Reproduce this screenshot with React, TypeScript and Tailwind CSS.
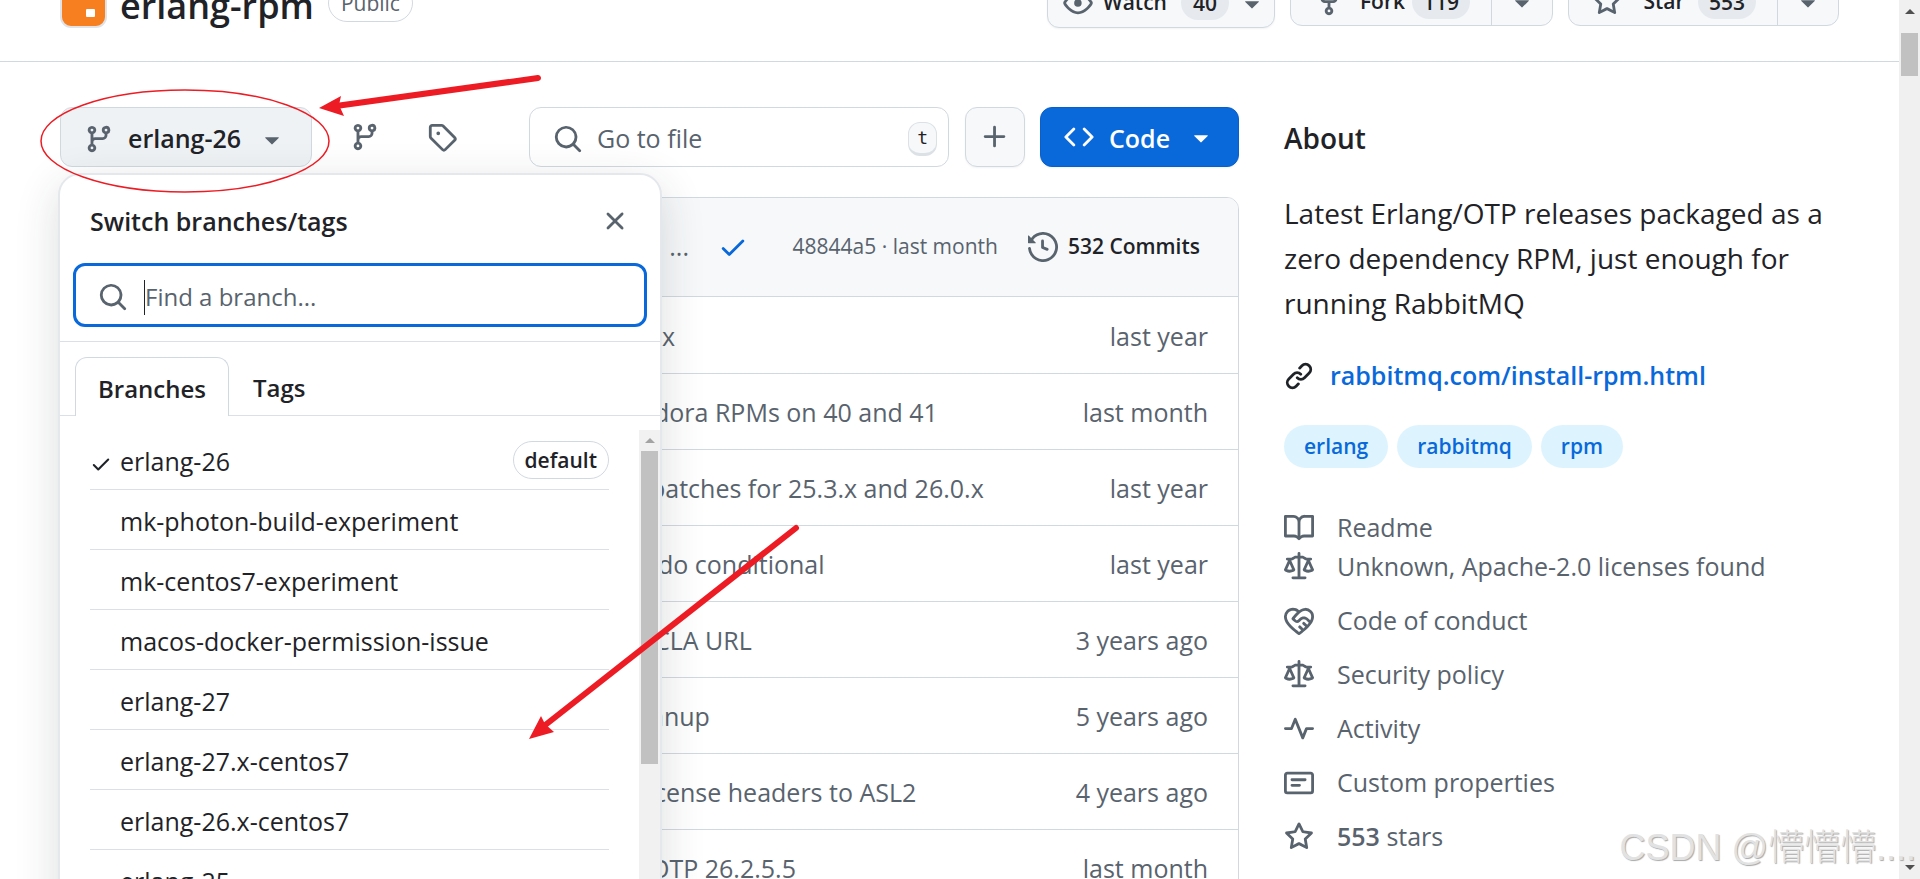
import React from "react";

const ICONS = {
  branch:
    "M9.5 3.25a2.25 2.25 0 1 1 3 2.122V6A2.5 2.5 0 0 1 10 8.5H6a1 1 0 0 0-1 1v1.128a2.251 2.251 0 1 1-1.5 0V5.372a2.25 2.25 0 1 1 1.5 0v1.836A2.493 2.493 0 0 1 6 7h4a1 1 0 0 0 1-1v-.628A2.25 2.25 0 0 1 9.5 3.25Zm-6 0a.75.75 0 1 0 1.5 0 .75.75 0 0 0-1.5 0Zm8.25-.75a.75.75 0 1 0 0 1.5.75.75 0 0 0 0-1.5ZM4.25 12a.75.75 0 1 0 0 1.5.75.75 0 0 0 0-1.5Z",
  tag: "M1 7.775V2.75C1 1.784 1.784 1 2.75 1h5.025c.464 0 .91.184 1.238.513l6.25 6.25a1.75 1.75 0 0 1 0 2.474l-5.026 5.026a1.75 1.75 0 0 1-2.474 0l-6.25-6.25A1.752 1.752 0 0 1 1 7.775Zm1.5 0c0 .066.026.13.073.177l6.25 6.25a.25.25 0 0 0 .354 0l5.025-5.025a.25.25 0 0 0 0-.354l-6.25-6.25a.25.25 0 0 0-.177-.073H2.75a.25.25 0 0 0-.25.25ZM6 5a1 1 0 1 1 0 2 1 1 0 0 1 0-2Z",
  search:
    "M10.68 11.74a6 6 0 0 1-7.922-8.982 6 6 0 0 1 8.982 7.922l3.04 3.04a.749.749 0 0 1-.326 1.275.749.749 0 0 1-.734-.215ZM11.5 7a4.499 4.499 0 1 0-8.997 0A4.499 4.499 0 0 0 11.5 7Z",
  plus: "M7.75 2a.75.75 0 0 1 .75.75V7h4.25a.75.75 0 0 1 0 1.5H8.5v4.25a.75.75 0 0 1-1.5 0V8.5H2.75a.75.75 0 0 1 0-1.5H7V2.75A.75.75 0 0 1 7.75 2Z",
  code: "m11.28 3.22 4.25 4.25a.75.75 0 0 1 0 1.06l-4.25 4.25a.749.749 0 0 1-1.275-.326.749.749 0 0 1 .215-.734L13.94 8l-3.72-3.72a.749.749 0 0 1 .326-1.275.749.749 0 0 1 .734.215Zm-6.56 0a.751.751 0 0 1 1.042.018.751.751 0 0 1 .018 1.042L2.06 8l3.72 3.72a.749.749 0 0 1-.326 1.275.749.749 0 0 1-.734-.215L.47 8.53a.75.75 0 0 1 0-1.06Z",
  caret:
    "m4.427 7.427 3.396 3.396a.25.25 0 0 0 .354 0l3.396-3.396A.25.25 0 0 0 11.396 7H4.604a.25.25 0 0 0-.177.427Z",
  close:
    "M3.72 3.72a.75.75 0 0 1 1.06 0L8 6.94l3.22-3.22a.749.749 0 0 1 1.275.326.749.749 0 0 1-.215.734L9.06 8l3.22 3.22a.749.749 0 0 1-.326 1.275.749.749 0 0 1-.734-.215L8 9.06l-3.22 3.22a.751.751 0 0 1-1.042-.018.751.751 0 0 1-.018-1.042L6.94 8 3.72 4.78a.75.75 0 0 1 0-1.06Z",
  check:
    "M13.78 4.22a.75.75 0 0 1 0 1.06l-7.25 7.25a.75.75 0 0 1-1.06 0L2.22 9.28a.751.751 0 0 1 .018-1.042.751.751 0 0 1 1.042-.018L6 10.94l6.72-6.72a.75.75 0 0 1 1.06 0Z",
  history:
    "m.427 1.927 1.215 1.215a8.002 8.002 0 1 1-1.6 5.685.75.75 0 1 1 1.493-.154 6.5 6.5 0 1 0 1.18-4.458l1.358 1.358A.25.25 0 0 1 3.896 6H.25A.25.25 0 0 1 0 5.75V2.104a.25.25 0 0 1 .427-.177ZM7.75 4a.75.75 0 0 1 .75.75v2.992l2.028.812a.75.75 0 0 1-.557 1.392l-2.5-1A.751.751 0 0 1 7 8.25v-3.5A.75.75 0 0 1 7.75 4Z",
  link: "m7.775 3.275 1.25-1.25a3.5 3.5 0 1 1 4.95 4.95l-2.5 2.5a3.5 3.5 0 0 1-4.95 0 .751.751 0 0 1 .018-1.042.751.751 0 0 1 1.042-.018 1.998 1.998 0 0 0 2.83 0l2.5-2.5a2.002 2.002 0 0 0-2.83-2.83l-1.25 1.25a.751.751 0 0 1-1.042-.018.751.751 0 0 1-.018-1.042Zm-4.69 9.64a1.998 1.998 0 0 0 2.83 0l1.25-1.25a.751.751 0 0 1 1.042.018.751.751 0 0 1 .018 1.042l-1.25 1.25a3.5 3.5 0 1 1-4.95-4.95l2.5-2.5a3.5 3.5 0 0 1 4.95 0 .751.751 0 0 1-.018 1.042.751.751 0 0 1-1.042.018 1.998 1.998 0 0 0-2.83 0l-2.5 2.5a1.998 1.998 0 0 0 0 2.83Z",
  book: "M0 1.75A.75.75 0 0 1 .75 1h4.253c1.227 0 2.317.59 3 1.501A3.743 3.743 0 0 1 11.006 1h4.245a.75.75 0 0 1 .75.75v10.5a.75.75 0 0 1-.75.75h-4.507a2.25 2.25 0 0 0-1.591.659l-.622.621a.75.75 0 0 1-1.06 0l-.622-.621A2.25 2.25 0 0 0 5.258 13H.75a.75.75 0 0 1-.75-.75Zm7.251 10.324.004-5.073-.002-2.253A2.25 2.25 0 0 0 5.003 2.5H1.5v9h3.757a3.75 3.75 0 0 1 1.994.574ZM8.755 4.75l-.004 7.322a3.752 3.752 0 0 1 1.992-.572H14.5v-9h-3.495a2.25 2.25 0 0 0-2.25 2.25Z",
  law: "M8.75.75V2h.985c.304 0 .603.08.867.231l1.29.736c.038.022.08.033.124.033h2.234a.75.75 0 0 1 0 1.5h-.427l2.111 4.692a.75.75 0 0 1-.154.838l-.53-.53.529.531-.001.002-.002.002-.006.006-.006.005-.01.01-.045.04c-.21.176-.441.327-.686.45C14.556 10.78 13.88 11 13 11a4.498 4.498 0 0 1-2.023-.454 3.544 3.544 0 0 1-.686-.45l-.045-.04-.016-.015-.006-.006-.004-.004v-.001a.75.75 0 0 1-.154-.838L12.178 4.5h-.162c-.305 0-.604-.079-.868-.231l-1.29-.736a.245.245 0 0 0-.124-.033H8.75V13h2.5a.75.75 0 0 1 0 1.5h-6.5a.75.75 0 0 1 0-1.5h2.5V3.5h-.984a.245.245 0 0 0-.124.033l-1.289.737c-.265.15-.564.23-.869.23h-.162l2.112 4.692a.75.75 0 0 1-.154.838l-.53-.53.529.531-.001.002-.002.002-.006.006-.016.015-.045.04c-.21.176-.441.327-.686.45C4.556 10.78 3.88 11 3 11a4.498 4.498 0 0 1-2.023-.454 3.544 3.544 0 0 1-.686-.45l-.045-.04-.016-.015-.006-.006-.004-.004v-.001a.75.75 0 0 1-.154-.838L2.178 4.5H1.75a.75.75 0 0 1 0-1.5h2.234a.249.249 0 0 0 .125-.033l1.288-.737c.265-.15.564-.23.869-.23h.984V.75a.75.75 0 0 1 1.5 0Zm2.945 8.477c.285.135.718.273 1.305.273s1.02-.138 1.305-.273L13 6.327Zm-10 0c.285.135.718.273 1.305.273s1.02-.138 1.305-.273L3 6.327Z",
  conduct:
    "M8.048 2.241c.964-.709 2.079-1.238 3.325-1.241a4.616 4.616 0 0 1 3.282 1.355c.41.408.757.86.996 1.428.238.568.348 1.206.347 1.968 0 2.193-1.505 4.254-3.081 5.862-1.496 1.526-3.213 2.796-4.249 3.563l-.22.163a.749.749 0 0 1-.895 0l-.221-.163c-1.036-.767-2.753-2.037-4.249-3.563C1.51 10.008.007 7.952.002 5.762a4.614 4.614 0 0 1 1.353-3.407C3.123.585 6.223.537 8.048 2.24Zm-1.153.983c-1.25-1.033-3.321-.967-4.48.191a3.115 3.115 0 0 0-.913 2.335c0 1.556 1.109 3.24 2.652 4.813C5.463 11.898 6.96 13.032 8 13.805c.353-.262.758-.565 1.191-.905l-1.326-1.223a.75.75 0 0 1 1.018-1.102l1.48 1.366c.328-.281.659-.577.984-.887L9.99 9.802a.75.75 0 1 1 1.019-1.103l1.384 1.28c.295-.329.566-.661.81-.995L12.92 8.7l-1.167-1.168c-.674-.671-1.78-.664-2.474.03-.268.269-.538.537-.802.797-.893.882-2.319.843-3.185-.032-.346-.35-.693-.697-1.043-1.047a.75.75 0 0 1-.04-1.016c.162-.191.336-.401.52-.623.62-.748 1.356-1.637 2.166-2.417Zm7.112 4.442c.313-.65.491-1.293.491-1.916v-.001c0-.614-.088-1.045-.23-1.385-.143-.339-.357-.633-.673-.949a3.111 3.111 0 0 0-2.218-.915c-1.092.003-2.165.627-3.226 1.602-.823.755-1.554 1.637-2.228 2.45l-.127.154.562.566a.755.755 0 0 0 1.066.02l.794-.79c1.258-1.258 3.312-1.31 4.594-.032.396.394.792.791 1.173 1.173Z",
  pulse:
    "M6 2c.306 0 .582.187.696.471L10 10.731l1.304-3.26A.751.751 0 0 1 12 7h3.25a.75.75 0 0 1 0 1.5h-2.742l-1.812 4.528a.751.751 0 0 1-1.392 0L6 4.77 4.696 8.03A.75.75 0 0 1 4 8.5H.75a.75.75 0 0 1 0-1.5h2.742l1.812-4.529A.751.751 0 0 1 6 2Z",
  note: "M0 3.75C0 2.784.784 2 1.75 2h12.5c.966 0 1.75.784 1.75 1.75v8.5A1.75 1.75 0 0 1 14.25 14H1.75A1.75 1.75 0 0 1 0 12.25Zm1.75-.25a.25.25 0 0 0-.25.25v8.5c0 .138.112.25.25.25h12.5a.25.25 0 0 0 .25-.25v-8.5a.25.25 0 0 0-.25-.25ZM3.5 6.25a.75.75 0 0 1 .75-.75h7a.75.75 0 0 1 0 1.5h-7a.75.75 0 0 1-.75-.75Zm.75 2.25h4a.75.75 0 0 1 0 1.5h-4a.75.75 0 0 1 0-1.5Z",
  star: "M8 .25a.75.75 0 0 1 .673.418l1.882 3.815 4.21.612a.75.75 0 0 1 .416 1.279l-3.046 2.97.719 4.192a.751.751 0 0 1-1.088.791L8 12.347l-3.766 1.98a.75.75 0 0 1-1.088-.79l.72-4.194L.818 6.374a.75.75 0 0 1 .416-1.28l4.21-.611L7.327.668A.75.75 0 0 1 8 .25Zm0 2.445L6.615 5.5a.75.75 0 0 1-.564.41l-3.097.45 2.24 2.184a.75.75 0 0 1 .216.664l-.528 3.084 2.769-1.456a.75.75 0 0 1 .698 0l2.77 1.456-.53-3.084a.75.75 0 0 1 .216-.664l2.24-2.183-3.096-.45a.75.75 0 0 1-.564-.41L8 2.694Z",
  eye: "M8 2c1.981 0 3.671.992 4.933 2.078 1.27 1.091 2.187 2.345 2.637 3.023a1.62 1.62 0 0 1 0 1.798c-.45.678-1.367 1.932-2.637 3.023C11.67 13.008 9.981 14 8 14c-1.981 0-3.671-.992-4.933-2.078C1.797 10.83.88 9.576.43 8.898a1.62 1.62 0 0 1 0-1.798c.45-.677 1.367-1.931 2.637-3.022C4.33 2.992 6.019 2 8 2ZM1.679 7.932a.12.12 0 0 0 0 .136c.411.622 1.241 1.75 2.366 2.717C5.176 11.758 6.527 12.5 8 12.5c1.473 0 2.825-.742 3.955-1.715 1.124-.967 1.954-2.096 2.366-2.717a.12.12 0 0 0 0-.136c-.412-.621-1.242-1.75-2.366-2.717C10.824 4.242 9.473 3.5 8 3.5c-1.473 0-2.825.742-3.955 1.715-1.124.967-1.954 2.096-2.366 2.717ZM8 10a2 2 0 1 1-.001-3.999A2 2 0 0 1 8 10Z",
  fork: "M5 5.372v.878c0 .414.336.75.75.75h4.5a.75.75 0 0 0 .75-.75v-.878a2.25 2.25 0 1 1 1.5 0v.878a2.25 2.25 0 0 1-2.25 2.25h-1.5v2.128a2.251 2.251 0 1 1-1.5 0V8.5h-1.5A2.25 2.25 0 0 1 3.5 6.25v-.878a2.25 2.25 0 1 1 1.5 0ZM5 3.25a.75.75 0 1 0-1.5 0 .75.75 0 0 0 1.5 0Zm6.75.75a.75.75 0 1 0 0-1.5.75.75 0 0 0 0 1.5Zm-3 8.75a.75.75 0 1 0-1.5 0 .75.75 0 0 0 1.5 0Z",
};

interface IconProps {
  name: keyof typeof ICONS;
  className?: string;
}

const Icon: React.FC<IconProps> = ({ name, className = "size-[30px] text-[#59636e]" }) => {
  return (
    <svg viewBox="0 0 16 16" fill="currentColor" aria-hidden="true" className={`shrink-0 ${className}`}>
      <path d={ICONS[name]} />
    </svg>
  );
};

const branches = [
  "erlang-26",
  "mk-photon-build-experiment",
  "mk-centos7-experiment",
  "macos-docker-permission-issue",
  "erlang-27",
  "erlang-27.x-centos7",
  "erlang-26.x-centos7",
  "erlang-25",
];

// The start of each message sits under the open menu
const commits = [
  { message: "x", date: "last year", indent: "pl-[601px]" },
  { message: "dora RPMs on 40 and 41", date: "last month", indent: "pl-[593px]" },
  { message: "patches for 25.3.x and 26.0.x", date: "last year", indent: "pl-[589px]" },
  { message: "do conditional", date: "last year", indent: "pl-[597px]" },
  { message: "CLA URL", date: "3 years ago", indent: "pl-[593px]" },
  { message: "anup", date: "5 years ago", indent: "pl-[589px]" },
  { message: "cense headers to ASL2", date: "4 years ago", indent: "pl-[593px]" },
  { message: "OTP 26.2.5.5", date: "last month", indent: "pl-[589px]" },
];

const topics = ["erlang", "rabbitmq", "rpm"];

const aboutLinks: { icon: keyof typeof ICONS; text: string }[] = [
  { icon: "book", text: "Readme" },
  { icon: "law", text: "Unknown, Apache-2.0 licenses found" },
  { icon: "conduct", text: "Code of conduct" },
  { icon: "law", text: "Security policy" },
  { icon: "pulse", text: "Activity" },
  { icon: "note", text: "Custom properties" },
];

interface CountButtonProps {
  icon: keyof typeof ICONS;
  label: string;
  count: string;
  labelWidth: string;
}

const CountButton: React.FC<CountButtonProps> = ({ icon, label, count, labelWidth }) => {
  return (
    <div className="flex h-[52px] rounded-xl border border-[#d1d9e0] bg-[#f6f8fa]">
      <button className="flex items-center pl-[23px] pr-[21px] pt-1">
        <Icon name={icon} />
        <span className={`ml-4 text-center text-[21px] font-semibold ${labelWidth}`}>{label}</span>
        <span className="ml-2 rounded-full bg-[#e6eaef] px-[11px] text-[21px] font-semibold leading-[34px]">
          {count}
        </span>
      </button>
      <button
        aria-label={`${label} options`}
        className="flex w-[61px] items-center justify-center border-l border-[#d1d9e0] pt-1"
      >
        <Icon name="caret" />
      </button>
    </div>
  );
};

const RepoHeader = () => {
  return (
    <header className="flex h-[62px] shrink-0 items-end justify-between overflow-hidden border-b border-[#d1d9e0] px-[60px] pb-[33px]">
      <div className="flex items-end">
        <svg viewBox="0 0 47 47" className="size-[47px] shrink-0" role="img" aria-label="rabbitmq">
          <rect x="1" y="1" width="45" height="45" rx="10" fill="#f77f20" stroke="#dfe3e8" strokeWidth="2" />
          <rect x="26" y="28" width="9" height="8" rx="1" fill="#fff" />
        </svg>
        <h1 className="ml-[13px] text-[36px] font-semibold leading-[44px]">erlang-rpm</h1>
        <span className="mb-[6px] ml-[14px] rounded-full border border-[#d1d9e0] px-3 text-[21px] font-medium leading-[36px] text-[#59636e]">
          Public
        </span>
      </div>
      <div className="flex items-start gap-[15px]">
        <button className="flex h-[54px] items-center rounded-xl border border-[#d1d9e0] bg-[#f6f8fa] pl-[15px] pr-[7px] pt-1 shadow-xs">
          <Icon name="eye" />
          <span className="ml-[10px] text-[21px] font-semibold">Watch</span>
          <span className="ml-[14px] rounded-full bg-[#e6eaef] px-3 text-[21px] font-semibold leading-[34px]">40</span>
          <Icon name="caret" className="ml-2 size-[30px] text-[#59636e]" />
        </button>
        <CountButton icon="fork" label="Fork" count="119" labelWidth="w-11" />
        <CountButton icon="star" label="Star" count="553" labelWidth="w-[52px]" />
      </div>
    </header>
  );
};

const Toolbar = () => {
  return (
    <div className="flex h-[60px] items-center">
      <button className="flex h-[60px] w-[252px] items-center rounded-xl border border-[#d1d9e0] bg-[#eff2f5] pl-[23px] pt-[3px]">
        <Icon name="branch" />
        <span className="ml-[14px] text-[25px] font-semibold">erlang-26</span>
        <Icon name="caret" className="ml-4 size-[30px] text-[#59636e]" />
      </button>
      <a href="#branches" aria-label="Branches" className="ml-[38px]">
        <Icon name="branch" />
      </a>
      <a href="#tags" aria-label="Tags" className="ml-[47px]">
        <Icon name="tag" />
      </a>
      <label className="ml-[72px] flex h-[60px] flex-1 items-center rounded-xl border border-[#d1d9e0] pl-[23px] pr-[11px] pt-1">
        <Icon name="search" />
        <input
          aria-label="Go to file"
          placeholder="Go to file"
          className="ml-[14px] w-0 flex-1 text-[25px] outline-none placeholder:text-[#59636e]"
        />
        <kbd className="rounded-xl border border-b-[3px] border-[#dce1e6] bg-[#f6f8fa] px-2 font-['DejaVu_Sans_Mono',monospace] text-lg leading-[30px]">
          t
        </kbd>
      </label>
      <button
        aria-label="Add file"
        className="ml-4 flex size-[60px] items-center justify-center rounded-xl border border-[#d1d9e0] bg-[#f6f8fa] shadow-xs"
      >
        <Icon name="plus" />
      </button>
      <button className="ml-[15px] flex h-[60px] w-[199px] items-center rounded-xl border border-[#0860ca] bg-[#0969da] pl-[23px] text-white shadow-xs">
        <Icon name="code" className="size-[30px]" />
        <span className="ml-[15px] pt-1 text-[25px] font-semibold">Code</span>
        <Icon name="caret" className="ml-4 size-[30px]" />
      </button>
    </div>
  );
};

const CommitTable = () => {
  return (
    <section className="mt-[30px] overflow-hidden rounded-t-xl border border-[#d1d9e0]">
      <div className="flex h-[99px] items-center border-b border-[#d1d9e0] bg-[#f6f8fa] pr-[38px]">
        <a href="#commit" className="w-[628px] text-right text-[25px] text-[#59636e]">
          <span className="text-[#0969da]">l</span> ...
        </a>
        <Icon name="check" className="ml-[29px] size-[30px] text-[#0969da]" />
        <span className="ml-auto whitespace-nowrap text-[21px] text-[#59636e]">48844a5 · last month</span>
        <a href="#commits" className="ml-[30px] flex items-center gap-[10px] whitespace-nowrap text-[21px] font-semibold">
          <Icon name="history" />
          532 Commits
        </a>
      </div>
      <table className="w-full text-[25px] text-[#59636e]">
        <tbody>
          {commits.map((item, idx) => {
            return (
              <tr key={idx} className="h-[76px] border-b border-[#d1d9e0]">
                <td className={`whitespace-nowrap pt-1 ${item.indent}`}>{item.message}</td>
                <td className="whitespace-nowrap pr-[30px] pt-1 text-right">{item.date}</td>
              </tr>
            );
          })}
        </tbody>
      </table>
    </section>
  );
};

const ScrollArrow = ({ className }: { className: string }) => {
  return (
    <svg viewBox="0 0 10 5" fill="currentColor" aria-hidden="true" className={`h-[5px] w-[10px] ${className}`}>
      <path d="M5 0 10 5H0Z" />
    </svg>
  );
};

const BranchMenu = () => {
  return (
    <div className="absolute left-[58px] top-[173px] z-10 flex h-[800px] w-[604px] flex-col rounded-[22px] border-2 border-[#e4e8ec] bg-white shadow-[0_12px_44px_rgba(37,41,46,0.16)]">
      <div className="flex items-center justify-between px-[30px] pb-[20px] pt-[24px]">
        <h2 className="text-[25px] font-semibold leading-[44px]">Switch branches/tags</h2>
        <button aria-label="Close">
          <Icon name="close" />
        </button>
      </div>
      <label className="mx-[13px] flex h-[64px] items-center rounded-xl border-[3px] border-[#0969da] pl-[22px] pt-1">
        <Icon name="search" />
        <span className="ml-4 h-[35px] w-px bg-[#1f2328]" />
        <input
          aria-label="Find a branch"
          placeholder="Find a branch..."
          className="w-0 flex-1 text-[24px] outline-none placeholder:text-[#59636e]"
        />
      </label>
      <div role="tablist" className="mt-[14px] flex h-[75px] items-end border-y border-[#dae0e7] pl-[15px]">
        <button
          role="tab"
          aria-selected="true"
          className="-mb-px h-[59px] w-[154px] rounded-t-xl border border-b-0 border-[#d1d9e0] bg-white pt-1 text-[24px] font-semibold"
        >
          Branches
        </button>
        <button role="tab" aria-selected="false" className="h-[58px] px-6 pt-1 text-[24px] font-semibold">
          Tags
        </button>
      </div>
      <div className="flex min-h-0 flex-1 justify-between pt-[14px]">
        <ul className="ml-[30px] w-[519px] overflow-hidden">
          {branches.map((branch, idx) => {
            return (
              <li key={branch} className="flex h-[60px] items-center border-b border-[#dae0e7]">
                <button className="flex flex-1 items-center pt-1 text-left text-[25px]">
                  <span className="w-[30px]">
                    {idx === 0 && <Icon name="check" className="mt-1 size-[22px] text-[#1f2328]" />}
                  </span>
                  {branch}
                </button>
                {idx === 0 && (
                  <span className="rounded-full border border-[#d1d9e0] px-[11px] text-[21px] font-semibold leading-[36px]">
                    default
                  </span>
                )}
              </li>
            );
          })}
        </ul>
        <div className="flex w-[21px] flex-col items-center bg-[#f1f1f1]">
          <ScrollArrow className="my-2 text-[#a3a3a3]" />
          <div className="h-[313px] w-[17px] bg-[#c1c1c1]" />
        </div>
      </div>
    </div>
  );
};

const About = () => {
  return (
    <aside className="w-[555px] shrink-0">
      <h2 className="pt-[9px] text-[28px] font-semibold leading-[45px]">About</h2>
      <p className="mt-[30px] text-[28px] leading-[45px]">
        Latest Erlang/OTP releases packaged as a zero dependency RPM, just enough for running RabbitMQ
      </p>
      <div className="mt-[27px] flex items-center gap-4">
        <Icon name="link" className="size-[30px] text-[#1f2328]" />
        <a href="#site" className="text-[25px] font-semibold leading-[45px] text-[#0969da]">
          rabbitmq.com/install-rpm.html
        </a>
      </div>
      <div className="mt-[27px] flex gap-[9px]">
        {topics.map((topic) => {
          return (
            <a
              key={topic}
              href="#topic"
              className="rounded-full bg-[#ddf4ff] px-5 text-[21px] font-semibold leading-[43px] text-[#0969da]"
            >
              {topic}
            </a>
          );
        })}
      </div>
      <ul className="mt-[40px] flex flex-col gap-[15px] text-[25px] leading-[39px] text-[#59636e]">
        {aboutLinks.map((item, idx) => {
          return (
            <li key={item.text} className={idx === 0 ? "-mb-[15px]" : ""}>
              <a href="#about" className="flex items-center gap-[23px]">
                <Icon name={item.icon} />
                {item.text}
              </a>
            </li>
          );
        })}
        <li>
          <a href="#stars" className="flex items-center gap-[23px]">
            <Icon name="star" />
            <span>
              <strong className="font-semibold">553</strong> stars
            </span>
          </a>
        </li>
      </ul>
    </aside>
  );
};

// Hand-drawn red marks over the page
const Marks = () => {
  return (
    <svg width="840" height="760" fill="none" aria-hidden="true" className="pointer-events-none absolute left-0 top-0 z-20">
      <ellipse cx="185" cy="141" rx="144" ry="51" stroke="#ed1c24" strokeWidth="1.5" />
      <path d="M538 78 336 106" stroke="#ed1c24" strokeWidth="6" strokeLinecap="round" />
      <path d="m319 108 22-12-2 9 5 11Z" fill="#ed1c24" />
      <path d="M796 528 544 726" stroke="#ed1c24" strokeWidth="6" strokeLinecap="round" />
      <path d="m529 739 12-23 4 8 9 8Z" fill="#ed1c24" />
    </svg>
  );
};

const App = () => {
  return (
    <div className="relative flex h-screen overflow-hidden bg-white font-['Open_Sans','Noto_Sans_CJK_SC',sans-serif] text-[#1f2328]">
      <div className="flex min-w-0 flex-1 flex-col">
        <RepoHeader />
        <main className="flex min-h-0 flex-1 items-start gap-[45px] px-[60px] pt-[45px]">
          <div className="min-w-0 flex-1">
            <Toolbar />
            <CommitTable />
          </div>
          <About />
        </main>
      </div>
      <div className="flex w-[21px] shrink-0 flex-col items-center bg-[#f0f0f0] py-[9px]">
        <ScrollArrow className="text-[#505050]" />
        <div className="mt-[19px] h-[43px] w-[17px] bg-[#c1c1c1]" />
        <ScrollArrow className="mt-auto rotate-180 text-[#505050]" />
      </div>
      <BranchMenu />
      <Marks />
      <span className="absolute bottom-[6px] right-1 z-20 whitespace-nowrap font-['Liberation_Sans','Noto_Sans_CJK_SC',sans-serif] text-[36px] font-light leading-[50px] text-[#e2e2e2] [text-shadow:1px_1px_1px_#a8a8a8]">
        CSDN @懵懵懵....
      </span>
    </div>
  );
};

export default App;
